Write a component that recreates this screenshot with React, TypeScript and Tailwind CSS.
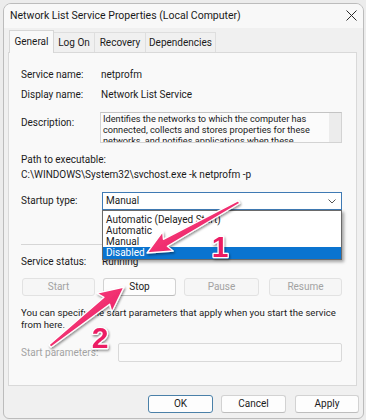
import React from "react";

type P = { x: number; y: number };

function arrowPath(tip: P, tail: P, headLen: number, headHalf: number, baseHalf: number, tailHalf: number) {
  const dx = tail.x - tip.x;
  const dy = tail.y - tip.y;
  const L = Math.hypot(dx, dy);
  const ux = dx / L;
  const uy = dy / L;
  const nx = -uy;
  const ny = ux;
  const bx = tip.x + ux * headLen;
  const by = tip.y + uy * headLen;
  const nb = { x: bx - ux * 3, y: by - uy * 3 };
  const pts: P[] = [
    tip,
    { x: bx + nx * headHalf, y: by + ny * headHalf },
    { x: nb.x + nx * baseHalf, y: nb.y + ny * baseHalf },
    { x: tail.x + nx * tailHalf, y: tail.y + ny * tailHalf },
    { x: tail.x - nx * tailHalf, y: tail.y - ny * tailHalf },
    { x: nb.x - nx * baseHalf, y: nb.y - ny * baseHalf },
    { x: bx - nx * headHalf, y: by - ny * headHalf },
  ];
  return "M" + pts.map((p) => `${p.x.toFixed(1)} ${p.y.toFixed(1)}`).join(" L") + " Z";
}

function Btn({ label, w, disabled, def }: { label: string; w: string; disabled?: boolean; def?: boolean }) {
  return (
    <div
      className={
        "h-[18px] flex items-center justify-center rounded-[3px] border " +
        w +
        " " +
        (disabled
          ? "border-[#e2e2e2] bg-[#f6f6f6] text-[#a2a2a2]"
          : def
          ? "border-[#4a80a8] bg-[#fdfdfd] text-[#1b1b1b]"
          : "border-[#d2d2d2] border-b-[#bdbdbd] bg-[#fdfdfd] text-[#1b1b1b]")
      }
    >
      {label}
    </div>
  );
}

export default function App() {
  const a1 = arrowPath({ x: 147, y: 253 }, { x: 239, y: 202 }, 24, 11, 4, 1.5);
  const a2 = arrowPath({ x: 124, y: 287 }, { x: 50, y: 346 }, 25, 12, 4.5, 1.5);
  return (
    <div className="relative w-[366px] h-[420px] overflow-hidden bg-[#ececec] font-['Roboto',sans-serif] text-[10px] text-[#1b1b1b] leading-[12px]">
      <div className="ml-[3px] mt-[3px] w-[361px] h-[416px] flex flex-col bg-[#f0f0f0] border border-[#bcbcbc] rounded-t-[8px] rounded-b-[6px] overflow-hidden">
        {/* title bar */}
        <div className="h-[24px] shrink-0 flex items-center justify-between pl-[6px] pr-[6px] bg-[#f8f8f8]">
          <span className="text-[10.5px] text-[#1a1a1a]">Network List Service Properties (Local Computer)</span>
          <svg width="11" height="11" viewBox="0 0 11 11" className="mt-[-1px]">
            <path d="M0.5 0.5 L10.5 10.5 M10.5 0.5 L0.5 10.5" stroke="#2a2a2a" strokeWidth="1" fill="none" />
          </svg>
        </div>
        {/* tabs */}
        <div className="h-[24px] shrink-0 flex items-end pl-[5px]">
          <div className="relative z-10 -mb-px h-[23px] w-[45px] flex items-center justify-center bg-[#f9f9f9] border border-b-0 border-[#d6d6d6]">
            General
          </div>
          <div className="h-[20px] w-[41px] flex items-center justify-center border border-l-0 border-b-0 border-[#dedede]">Log On</div>
          <div className="h-[20px] w-[51px] flex items-center justify-center border border-l-0 border-b-0 border-[#dedede]">Recovery</div>
          <div className="h-[20px] w-[70px] flex items-center justify-center border border-l-0 border-b-0 border-[#dedede]">Dependencies</div>
        </div>
        {/* panel */}
        <div className="relative ml-[4px] mr-[6px] h-[334px] shrink-0 bg-[#f9f9f9] border border-[#d9d9d9] pl-[12px] pr-[14px] pt-[12px]">
          <div className="h-[20px] flex items-center">
            <div className="w-[80px]">Service name:</div>
            <div>netprofm</div>
          </div>
          <div className="h-[20px] flex items-center">
            <div className="w-[80px]">Display name:</div>
            <div>Network List Service</div>
          </div>
          <div className="mt-[7px] flex items-start">
            <div className="w-[79px] pt-[5px]">Description:</div>
            <div className="flex-1 h-[31px] flex border border-[#d3d3d3] border-t-[#c4c4c4] bg-[#fbfbfb] overflow-hidden">
              <div className="flex-1 pl-[2px] text-[9.2px] leading-[11px] whitespace-nowrap overflow-hidden">
                <div>Identifies the networks to which the computer has</div>
                <div>connected, collects and stores properties for these</div>
                <div>networks, and notifies applications when these</div>
              </div>
              <div className="w-[12px] bg-[#ececec]" />
            </div>
          </div>
          <div className="mt-[11px]">Path to executable:</div>
          <div className="mt-[3px]">C:\WINDOWS\System32\svchost.exe -k netprofm -p</div>
          <div className="mt-[11px] h-[18px] flex items-center">
            <div className="w-[81px]">Startup type:</div>
            <div className="flex-1 h-[18px] flex items-center justify-between border border-[#3f7ab4] bg-white pl-[3px] pr-[5px]">
              <span>Manual</span>
              <svg width="8" height="5" viewBox="0 0 8 5">
                <path d="M0.5 0.5 L4 4 L7.5 0.5" stroke="#555" strokeWidth="1" fill="none" />
              </svg>
            </div>
          </div>
          <div className="mt-[34px] h-px bg-[#d6d6d6]" />
          <div className="mt-[11px] flex">
            <div className="w-[81px]">Service status:</div>
            <div>Running</div>
          </div>
          <div className="mt-[10px] ml-[1px] flex">
            <Btn label="Start" w="w-[73px]" disabled />
            <div className="w-[8px]" />
            <Btn label="Stop" w="w-[73px]" />
            <div className="w-[8px]" />
            <Btn label="Pause" w="w-[75px]" disabled />
            <div className="w-[10px]" />
            <Btn label="Resume" w="w-[73px]" disabled />
          </div>
          <div className="mt-[11px] whitespace-nowrap text-[9.6px]">
            <div>You can specify the start parameters that apply when you start the service</div>
            <div>from here.</div>
          </div>
          <div className="mt-[12px] h-[19px] flex items-center">
            <div className="w-[97px] text-[#a3a3a3]">Start parameters:</div>
            <div className="flex-1 h-[19px] border border-[#d9d9d9] bg-[#fafafa] rounded-[2px]" />
          </div>
          {/* dropdown list */}
          <div className="absolute left-[93px] top-[157px] w-[240px] h-[50px] bg-white border border-[#6a6a6a] shadow-[2px_2px_3px_rgba(0,0,0,0.35)] pt-[3px] leading-[11px]">
            <div className="h-[11px] pl-[3px]">Automatic (Delayed Start)</div>
            <div className="h-[11px] pl-[3px]">Automatic</div>
            <div className="h-[11px] pl-[3px]">Manual</div>
            <div className="h-[12px] pl-[3px] bg-[#0a74d0] text-white leading-[12px]">Disabled</div>
          </div>
        </div>
        {/* bottom buttons */}
        <div className="mt-[9px] flex justify-end pr-[4px]">
          <Btn label="OK" w="w-[65px]" def />
          <div className="w-[8px]" />
          <Btn label="Cancel" w="w-[65px]" />
          <div className="w-[9px]" />
          <Btn label="Apply" w="w-[64px]" />
        </div>
      </div>

      {/* annotation arrows */}
      <svg className="absolute left-0 top-0 pointer-events-none" width="366" height="420" viewBox="0 0 366 420">
        <defs>
          <linearGradient id="pk" x1="0" y1="0" x2="1" y2="1">
            <stop offset="0" stopColor="#ff4a86" />
            <stop offset="1" stopColor="#e3155c" />
          </linearGradient>
          <filter id="sh" x="-20%" y="-20%" width="140%" height="140%">
            <feDropShadow dx="1" dy="1.5" stdDeviation="1.2" floodColor="#000" floodOpacity="0.45" />
          </filter>
        </defs>
        <g filter="url(#sh)">
          <path d={a1} fill="url(#pk)" stroke="#ffffff" strokeWidth="1.3" strokeLinejoin="round" />
          <path d={a2} fill="url(#pk)" stroke="#ffffff" strokeWidth="1.3" strokeLinejoin="round" />
          <text x="220" y="257" textAnchor="middle" fontFamily="Liberation Sans, Arial, sans-serif" fontWeight="bold" fontSize="30" fill="#ec1f63" stroke="#ffffff" strokeWidth="2.5" paintOrder="stroke" strokeLinejoin="round">1</text>
          <text x="100" y="348" textAnchor="middle" fontFamily="Liberation Sans, Arial, sans-serif" fontWeight="bold" fontSize="30" fill="#ec1f63" stroke="#ffffff" strokeWidth="2.5" paintOrder="stroke" strokeLinejoin="round">2</text>
        </g>
      </svg>
    </div>
  );
}
